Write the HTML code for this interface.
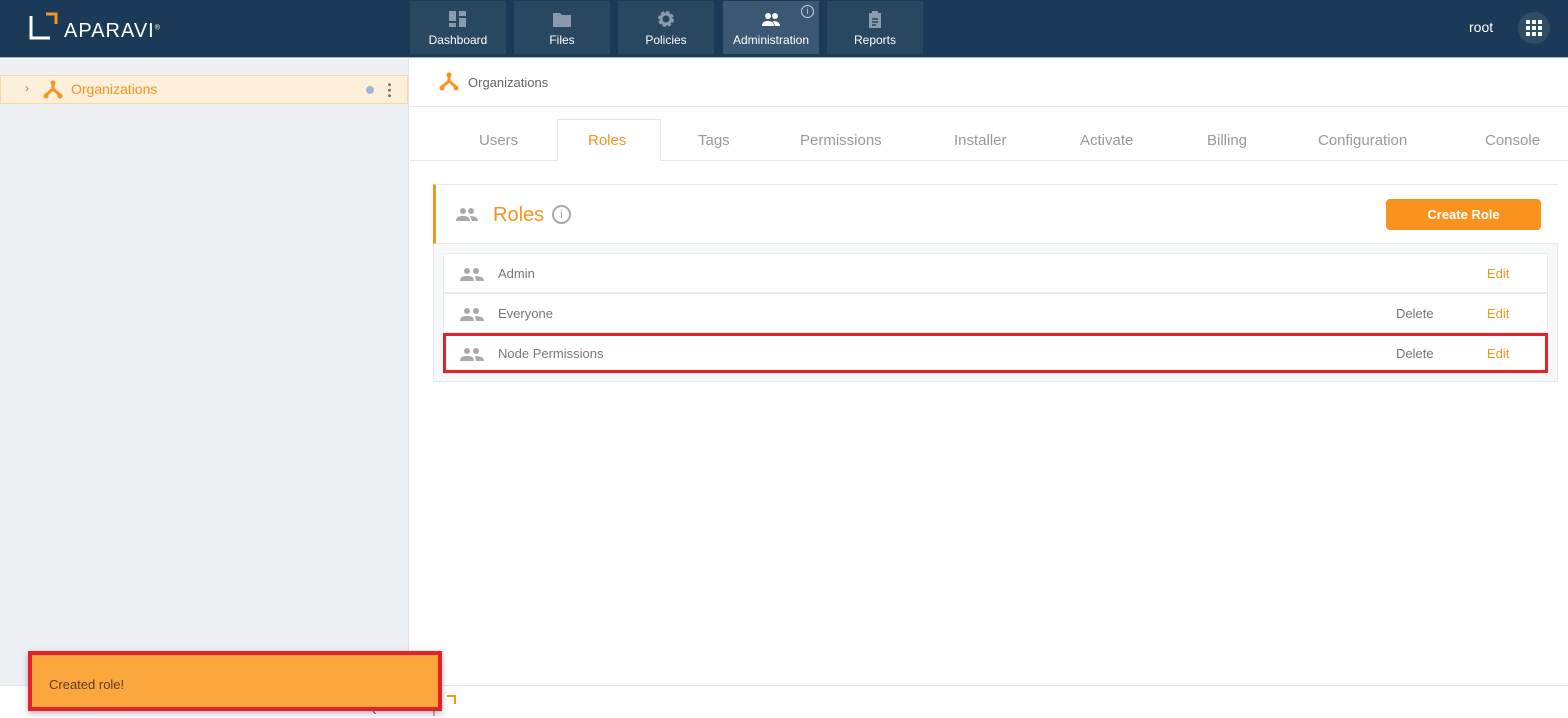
<!DOCTYPE html>
<html><head><style>
*{box-sizing:border-box;margin:0;padding:0}
body{width:1568px;height:716px;overflow:hidden;font-family:"Liberation Sans",sans-serif;background:#fff;position:relative}
.hdr{position:absolute;left:0;top:0;width:1568px;height:58px;background:#1b3a57;border-bottom:1px solid #9fb0c0}
.nav{position:absolute;top:1px;width:96px;height:53px;background:#284760;color:#fff;font-size:12px;text-align:center}
.nav svg{position:absolute;left:38px;top:9px}
.nav span{position:absolute;left:0;right:0;top:32px}
.side{position:absolute;left:0;top:59px;width:409px;height:627px;background:#eef1f4;border-right:1px solid #e0e4e8}
.org{position:absolute;left:0;top:75px;width:408px;height:29px;background:#fdefd9;border:1px solid #f8d6a6;color:#f7931e;font-size:14px}
.tab{position:absolute;top:132px;font-size:15px;color:#999}
.row{position:absolute;left:443px;width:1105px;height:40px;border:1px solid #e8ebee;font-size:13px;color:#777}
.row .n{position:absolute;left:54px;top:12px}
.row .e{position:absolute;left:1043px;top:12px;color:#f7931e}
.row .d{position:absolute;left:952px;top:12px}
.row svg{position:absolute;left:16px;top:13px}
</style></head><body>
<div class="hdr">
 <svg style="position:absolute;left:28px;top:11px" width="32" height="30"><path d="M3 5V27H22" stroke="#fff" stroke-width="3" fill="none"/><path d="M18 3H28V13" stroke="#f7931e" stroke-width="3" fill="none"/></svg>
 <div style="position:absolute;left:64px;top:20px;color:#fff;font-size:20px;letter-spacing:1px">APARAVI<sup style="font-size:7px">®</sup></div>
 <div class="nav" style="left:410px"><svg width="20" height="18"><path d="M1 1h7v10H1zM11 1h7v5h-7zM11 8h7v9h-7zM1 13h7v4H1z" fill="#8a9bab"/></svg><span>Dashboard</span></div>
 <div class="nav" style="left:514px"><svg width="20" height="18"><path d="M1 3h7l2 2h9v12H1z" fill="#8a9bab"/></svg><span>Files</span></div>
 <div class="nav" style="left:618px"><svg width="20" height="18"><circle cx="10" cy="9" r="6" fill="none" stroke="#8a9bab" stroke-width="4" stroke-dasharray="3 1.7"/><circle cx="10" cy="9" r="5" fill="none" stroke="#8a9bab" stroke-width="3"/></svg><span>Policies</span></div>
 <div class="nav" style="left:723px;background:#3a5873"><svg width="20" height="18"><circle cx="7" cy="6" r="3" fill="#fff"/><circle cx="14" cy="6" r="3" fill="#fff"/><path d="M1 16c0-4 3-5 6-5s6 1 6 5zM12 11c3 0 7 1 7 5h-5z" fill="#fff"/></svg><span>Administration</span>
  <div style="position:absolute;right:5px;top:4px;width:13px;height:13px;border:1px solid #ccd;border-radius:50%;font-size:9px;line-height:11px;color:#ccd">i</div></div>
 <div class="nav" style="left:827px"><svg width="20" height="18"><path d="M4 3h12v15H4z" fill="#8a9bab"/><path d="M7 1h6v4H7z" fill="#8a9bab"/><path d="M7 9h6M7 12h6M7 15h4" stroke="#284760" stroke-width="1.5"/></svg><span>Reports</span></div>
 <div style="position:absolute;left:1469px;top:19px;color:#fff;font-size:14px">root</div>
 <div style="position:absolute;left:1518px;top:12px;width:32px;height:32px;border-radius:50%;background:#2e4d69">
  <svg style="position:absolute;left:8px;top:8px" width="16" height="16" fill="#fff"><rect x="0" y="0" width="4" height="4"/><rect x="6" y="0" width="4" height="4"/><rect x="12" y="0" width="4" height="4"/><rect x="0" y="6" width="4" height="4"/><rect x="6" y="6" width="4" height="4"/><rect x="12" y="6" width="4" height="4"/><rect x="0" y="12" width="4" height="4"/><rect x="6" y="12" width="4" height="4"/><rect x="12" y="12" width="4" height="4"/></svg></div>
</div>
<div class="side"></div>
<div class="org">
 <span style="position:absolute;left:24px;top:5px;color:#888;font-size:12px">›</span>
 <svg style="position:absolute;left:42px;top:4px" width="20" height="19"><path d="M10 2V9L3 15M10 9L17 15" stroke="#f7931e" stroke-width="3" fill="none"/><circle cx="10" cy="3" r="2.5" fill="#f7931e"/><circle cx="3" cy="16" r="2.5" fill="#f7931e"/><circle cx="17" cy="16" r="2.5" fill="#f7931e"/></svg>
 <span style="position:absolute;left:70px;top:5px">Organizations</span>
 <span style="position:absolute;left:365px;top:10px;width:8px;height:8px;border-radius:50%;background:#9bb8d3"></span>
 <span style="position:absolute;left:387px;top:6px;width:3px;height:16px;background:radial-gradient(circle,#777 1.4px,transparent 1.6px) 0 0/3px 5.5px"></span>
</div>
<svg style="position:absolute;left:439px;top:72px" width="20" height="19"><path d="M10 2V9L3 15M10 9L17 15" stroke="#f7931e" stroke-width="3" fill="none"/><circle cx="10" cy="3" r="2.5" fill="#f7931e"/><circle cx="3" cy="16" r="2.5" fill="#f7931e"/><circle cx="17" cy="16" r="2.5" fill="#f7931e"/></svg>
<div style="position:absolute;left:468px;top:75px;font-size:13px;color:#666">Organizations</div>
<div style="position:absolute;left:410px;top:106px;width:1158px;border-top:1px solid #e6e9ec"></div>
<div style="position:absolute;left:410px;top:160px;width:1158px;border-top:1px solid #e6e9ec"></div>
<div style="position:absolute;left:557px;top:119px;width:104px;height:42px;background:#fff;border:1px solid #e2e5e8;border-bottom:none"></div>
<div class="tab" style="left:479px">Users</div>
<div class="tab" style="left:588px;color:#f7931e">Roles</div>
<div class="tab" style="left:698px">Tags</div>
<div class="tab" style="left:800px">Permissions</div>
<div class="tab" style="left:954px">Installer</div>
<div class="tab" style="left:1080px">Activate</div>
<div class="tab" style="left:1207px">Billing</div>
<div class="tab" style="left:1318px">Configuration</div>
<div class="tab" style="left:1485px">Console</div>
<div style="position:absolute;left:433px;top:184px;width:1125px;height:198px;border:1px solid #e6e9ec;background:#f7f8f9"></div>
<div style="position:absolute;left:433px;top:184px;width:1125px;height:60px;background:#fff;border-left:3px solid #f7931e;border-bottom:1px solid #e6e9ec;border-top:1px solid #e6e9ec"></div>
<svg style="position:absolute;left:456px;top:206px" width="22" height="16" fill="#aaa"><circle cx="7" cy="5" r="3"/><circle cx="15" cy="5" r="3"/><path d="M0 15c0-4 3-5 7-5s7 1 7 5zM14 10c4 0 8 1 8 5h-6z"/></svg>
<div style="position:absolute;left:493px;top:204px;font-size:20px;color:#f7931e">Roles</div>
<div style="position:absolute;left:552px;top:205px;width:19px;height:19px;border:2px solid #aaa;border-radius:50%;font-size:12px;line-height:15px;text-align:center;color:#aaa">i</div>
<div style="position:absolute;left:1386px;top:199px;width:155px;height:31px;background:#f7931e;border-radius:4px;color:#fff;font-size:13px;font-weight:bold;text-align:center;line-height:31px">Create Role</div>
<div class="row" style="top:253px;background:#fff"><svg width="24" height="15" fill="#aaa"><circle cx="7" cy="4" r="3"/><circle cx="16" cy="4" r="3"/><path d="M0 14c0-4 3-5 7-5s7 1 7 5zM15 9c4 0 9 1 9 5h-8z"/></svg><span class="n">Admin</span><span class="e">Edit</span></div>
<div class="row" style="top:293px;background:#fff"><svg width="24" height="15" fill="#aaa"><circle cx="7" cy="4" r="3"/><circle cx="16" cy="4" r="3"/><path d="M0 14c0-4 3-5 7-5s7 1 7 5zM15 9c4 0 9 1 9 5h-8z"/></svg><span class="n">Everyone</span><span class="d">Delete</span><span class="e">Edit</span></div>
<div class="row" style="top:333px;background:#fff;border:3px solid #e8202a"><svg width="24" height="15" fill="#aaa" style="left:14px;top:11px"><circle cx="7" cy="4" r="3"/><circle cx="16" cy="4" r="3"/><path d="M0 14c0-4 3-5 7-5s7 1 7 5zM15 9c4 0 9 1 9 5h-8z"/></svg><span class="n" style="left:52px;top:10px">Node Permissions</span><span class="d" style="left:950px;top:10px">Delete</span><span class="e" style="left:1041px;top:10px">Edit</span></div>
<div style="position:absolute;left:0;top:685px;width:1568px;height:31px;background:#fff;border-top:1px solid #e4e7ea"></div>
<svg style="position:absolute;left:431px;top:694px" width="28" height="22"><path d="M3 4V22" stroke="#bbb" stroke-width="2" fill="none"/><path d="M16 2H24V10" stroke="#f7931e" stroke-width="2" fill="none"/></svg>
<div style="position:absolute;left:372px;top:702px;color:#666;font-size:14px">‹</div>
<div style="position:absolute;left:28px;top:651px;width:414px;height:60px;background:#fca63e;border:4px solid #e8202a;box-shadow:0 2px 6px rgba(0,0,0,.3)">
 <span style="position:absolute;left:17px;top:22px;font-size:13px;color:#5a4020">Created role!</span></div>
</body></html>
